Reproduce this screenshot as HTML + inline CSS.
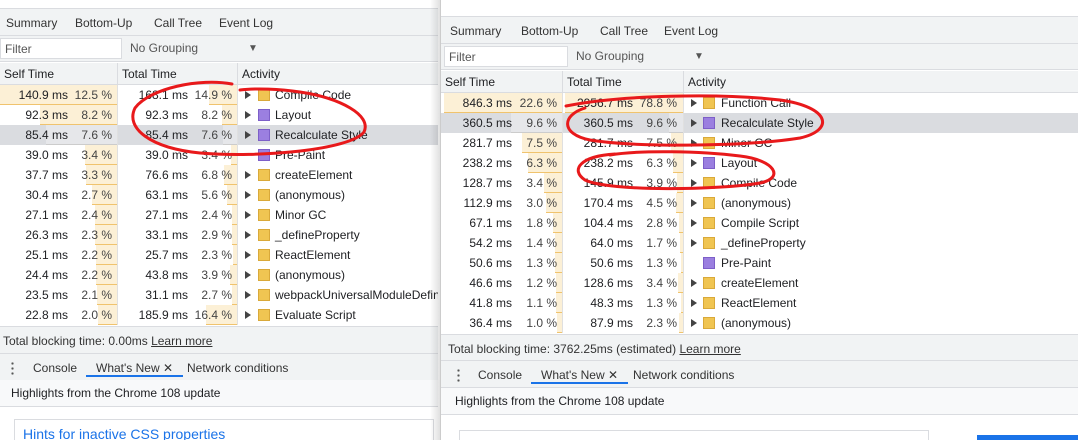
<!DOCTYPE html>
<html><head><meta charset="utf-8"><style>
*{box-sizing:border-box;margin:0;padding:0}
body{width:1078px;height:440px;overflow:hidden;background:#fff;font-family:"Liberation Sans",sans-serif;font-size:12px;color:#202124;position:relative}
.p{position:absolute;top:0;height:440px;overflow:hidden;background:#fff}
.tabs{position:absolute;left:0;right:0;height:28px;background:#f1f3f4;border-top:1px solid #dadce0;border-bottom:1px solid #dadce0}
.tabs span{position:absolute;top:7px;color:#333}
.tabs .a{border-bottom:2px solid #1a73e8;padding-bottom:6px}
.flt{position:absolute;left:0;right:0;height:26px;background:#f1f3f4;border-bottom:1px solid #dadce0}
.flt .in{position:absolute;top:2px;height:21px;background:#fff;border:1px solid #dadce0;padding:3px 4px;color:#555}
.flt .g{position:absolute;top:5px;color:#555}
.hd{position:absolute;left:0;right:0;height:22px;background:#f1f3f4;border-bottom:1px solid #dadce0}
.hd span{position:absolute;top:4px;height:22px;top:0;padding:4px 4px;border-right:1px solid #dadce0}
.rows{position:absolute;left:0;right:0}
.r{position:relative;height:20px}
.r.sel{background:#dadce0}
.c{position:absolute;top:0;height:20px;border-right:1px solid #e0e0e0}
.c i{position:absolute;right:0;top:0;height:20px;background:#fcf0d6;border-bottom:1px solid #f0c36d}
.sel .c i{background:#e6e7ea;border-bottom-color:#ccc}
.c b,.c em{position:absolute;top:3px;font-weight:normal;font-style:normal;white-space:nowrap}
.c em{color:#444}
.act{position:absolute;top:3px;white-space:nowrap}
.tri{position:absolute;top:6px;width:0;height:0;border-left:6px solid #444;border-top:4px solid transparent;border-bottom:4px solid transparent}
.sq{position:absolute;top:4px;width:12px;height:12px}
.y{background:#f0c552;border:1px solid #d9a93a}
.v{background:#9b7fe0;border:1px solid #7d5fc8}
.tb{position:absolute;left:0;right:0;height:27px;background:#f1f3f4;border-top:1px solid #dadce0;color:#333}
.dr{position:absolute;left:0;right:0;height:28px;background:#f1f3f4;border-top:1px solid #dadce0;border-bottom:1px solid #dadce0}
.dr span{position:absolute;top:7px;color:#333}
.dr .a{border-bottom:2px solid #1a73e8;padding-bottom:5px}
.hl{position:absolute;left:0;right:0;height:27px;background:#f8f9fa;border-bottom:1px solid #dadce0;padding:6px 11px}
.dots{position:absolute;top:7px;width:3px;height:14px;background:radial-gradient(circle,#555 1px,transparent 1.3px) 0 0/3px 5px}
u{color:#333}
</style></head><body>

<!-- LEFT PANEL -->
<div class="p" style="left:0;width:438px">
<div class="tabs" style="top:8px"><span style="left:6px">Summary</span><span class="a" style="left:67px;padding-left:8px;padding-right:7px">Bottom-Up</span><span style="left:154px">Call Tree</span><span style="left:219px">Event Log</span></div>
<div class="flt" style="top:36px"><div class="in" style="left:0;width:122px">Filter</div><span class="g" style="left:130px">No Grouping</span><span class="g" style="left:248px;font-size:10px;top:7px">▼</span></div>
<div class="hd" style="top:63px"><span style="left:0;width:118px">Self Time</span><span style="left:118px;width:120px">Total Time</span><span style="left:238px;border:0">Activity</span></div>
<div class="rows" style="top:85px">
<div class="r"><div class="c" style="left:0;width:118px"><i style="width:117px"></i><b style="right:49px">140.9 ms</b><em style="right:5px">12.5 %</em></div><div class="c" style="left:118px;width:120px"><i style="width:28px"></i><b style="right:49px">168.1 ms</b><em style="right:5px">14.9 %</em></div><div class="tri" style="left:245px"></div><div class="sq y" style="left:258px"></div><span class="act" style="left:275px">Compile Code</span></div>
<div class="r"><div class="c" style="left:0;width:118px"><i style="width:77px"></i><b style="right:49px">92.3 ms</b><em style="right:5px">8.2 %</em></div><div class="c" style="left:118px;width:120px"><i style="width:15px"></i><b style="right:49px">92.3 ms</b><em style="right:5px">8.2 %</em></div><div class="tri" style="left:245px"></div><div class="sq v" style="left:258px"></div><span class="act" style="left:275px">Layout</span></div>
<div class="r sel"><div class="c" style="left:0;width:118px"><i style="width:71px"></i><b style="right:49px">85.4 ms</b><em style="right:5px">7.6 %</em></div><div class="c" style="left:118px;width:120px"><i style="width:14px"></i><b style="right:49px">85.4 ms</b><em style="right:5px">7.6 %</em></div><div class="tri" style="left:245px"></div><div class="sq v" style="left:258px"></div><span class="act" style="left:275px">Recalculate Style</span></div>
<div class="r"><div class="c" style="left:0;width:118px"><i style="width:32px"></i><b style="right:49px">39.0 ms</b><em style="right:5px">3.4 %</em></div><div class="c" style="left:118px;width:120px"><i style="width:6px"></i><b style="right:49px">39.0 ms</b><em style="right:5px">3.4 %</em></div><div class="sq v" style="left:258px"></div><span class="act" style="left:275px">Pre-Paint</span></div>
<div class="r"><div class="c" style="left:0;width:118px"><i style="width:31px"></i><b style="right:49px">37.7 ms</b><em style="right:5px">3.3 %</em></div><div class="c" style="left:118px;width:120px"><i style="width:13px"></i><b style="right:49px">76.6 ms</b><em style="right:5px">6.8 %</em></div><div class="tri" style="left:245px"></div><div class="sq y" style="left:258px"></div><span class="act" style="left:275px">createElement</span></div>
<div class="r"><div class="c" style="left:0;width:118px"><i style="width:25px"></i><b style="right:49px">30.4 ms</b><em style="right:5px">2.7 %</em></div><div class="c" style="left:118px;width:120px"><i style="width:10px"></i><b style="right:49px">63.1 ms</b><em style="right:5px">5.6 %</em></div><div class="tri" style="left:245px"></div><div class="sq y" style="left:258px"></div><span class="act" style="left:275px">(anonymous)</span></div>
<div class="r"><div class="c" style="left:0;width:118px"><i style="width:22px"></i><b style="right:49px">27.1 ms</b><em style="right:5px">2.4 %</em></div><div class="c" style="left:118px;width:120px"><i style="width:5px"></i><b style="right:49px">27.1 ms</b><em style="right:5px">2.4 %</em></div><div class="tri" style="left:245px"></div><div class="sq y" style="left:258px"></div><span class="act" style="left:275px">Minor GC</span></div>
<div class="r"><div class="c" style="left:0;width:118px"><i style="width:22px"></i><b style="right:49px">26.3 ms</b><em style="right:5px">2.3 %</em></div><div class="c" style="left:118px;width:120px"><i style="width:5px"></i><b style="right:49px">33.1 ms</b><em style="right:5px">2.9 %</em></div><div class="tri" style="left:245px"></div><div class="sq y" style="left:258px"></div><span class="act" style="left:275px">_defineProperty</span></div>
<div class="r"><div class="c" style="left:0;width:118px"><i style="width:21px"></i><b style="right:49px">25.1 ms</b><em style="right:5px">2.2 %</em></div><div class="c" style="left:118px;width:120px"><i style="width:4px"></i><b style="right:49px">25.7 ms</b><em style="right:5px">2.3 %</em></div><div class="tri" style="left:245px"></div><div class="sq y" style="left:258px"></div><span class="act" style="left:275px">ReactElement</span></div>
<div class="r"><div class="c" style="left:0;width:118px"><i style="width:21px"></i><b style="right:49px">24.4 ms</b><em style="right:5px">2.2 %</em></div><div class="c" style="left:118px;width:120px"><i style="width:7px"></i><b style="right:49px">43.8 ms</b><em style="right:5px">3.9 %</em></div><div class="tri" style="left:245px"></div><div class="sq y" style="left:258px"></div><span class="act" style="left:275px">(anonymous)</span></div>
<div class="r"><div class="c" style="left:0;width:118px"><i style="width:20px"></i><b style="right:49px">23.5 ms</b><em style="right:5px">2.1 %</em></div><div class="c" style="left:118px;width:120px"><i style="width:5px"></i><b style="right:49px">31.1 ms</b><em style="right:5px">2.7 %</em></div><div class="tri" style="left:245px"></div><div class="sq y" style="left:258px"></div><span class="act" style="left:275px">webpackUniversalModuleDefin</span></div>
<div class="r"><div class="c" style="left:0;width:118px"><i style="width:19px"></i><b style="right:49px">22.8 ms</b><em style="right:5px">2.0 %</em></div><div class="c" style="left:118px;width:120px"><i style="width:31px"></i><b style="right:49px">185.9 ms</b><em style="right:5px">16.4 %</em></div><div class="tri" style="left:245px"></div><div class="sq y" style="left:258px"></div><span class="act" style="left:275px">Evaluate Script</span></div>
</div>
<div class="tb" style="top:326px;padding:7px 3px">Total blocking time: 0.00ms <u>Learn more</u></div>
<div class="dr" style="top:353px"><div class="dots" style="left:11px"></div><span style="left:33px">Console</span><span class="a" style="left:86px;padding:0 10px">What's New <span style="position:static">✕</span></span><span style="left:187px">Network conditions</span></div>
<div class="hl" style="top:380px">Highlights from the Chrome 108 update</div>
<div style="position:absolute;left:14px;top:419px;width:420px;height:30px;border:1px solid #dadce0;padding:6px 8px;color:#1a73e8;font-size:14px">Hints for inactive CSS properties</div>
</div>
<div style="position:absolute;left:430px;top:0;width:10px;height:440px;background:linear-gradient(90deg,rgba(0,0,0,0),rgba(0,0,0,.12))"></div>

<!-- RIGHT PANEL -->
<div class="p" style="left:440px;width:638px;border-left:1px solid #ccc">
<div class="tabs" style="top:16px"><span style="left:9px">Summary</span><span class="a" style="left:70px;padding-left:10px;padding-right:10px">Bottom-Up</span><span style="left:159px">Call Tree</span><span style="left:223px">Event Log</span></div>
<div class="flt" style="top:44px"><div class="in" style="left:3px;width:124px">Filter</div><span class="g" style="left:135px">No Grouping</span><span class="g" style="left:253px;font-size:10px;top:7px">▼</span></div>
<div class="hd" style="top:71px"><span style="left:0;width:122px">Self Time</span><span style="left:122px;width:121px">Total Time</span><span style="left:243px;border:0">Activity</span></div>
<div class="rows" style="top:93px">
<div class="r"><div class="c" style="left:0;width:122px"><i style="width:118px"></i><b style="right:50px">846.3 ms</b><em style="right:5px">22.6 %</em></div><div class="c" style="left:122px;width:121px"><i style="width:118px"></i><b style="right:50px">2956.7 ms</b><em style="right:6px">78.8 %</em></div><div class="tri" style="left:250px"></div><div class="sq y" style="left:262px"></div><span class="act" style="left:280px">Function Call</span></div>
<div class="r sel"><div class="c" style="left:0;width:122px"><i style="width:51px"></i><b style="right:50px">360.5 ms</b><em style="right:5px">9.6 %</em></div><div class="c" style="left:122px;width:121px"><i style="width:14px"></i><b style="right:50px">360.5 ms</b><em style="right:6px">9.6 %</em></div><div class="tri" style="left:250px"></div><div class="sq v" style="left:262px"></div><span class="act" style="left:280px">Recalculate Style</span></div>
<div class="r"><div class="c" style="left:0;width:122px"><i style="width:40px"></i><b style="right:50px">281.7 ms</b><em style="right:5px">7.5 %</em></div><div class="c" style="left:122px;width:121px"><i style="width:12px"></i><b style="right:50px">281.7 ms</b><em style="right:6px">7.5 %</em></div><div class="tri" style="left:250px"></div><div class="sq y" style="left:262px"></div><span class="act" style="left:280px">Minor GC</span></div>
<div class="r"><div class="c" style="left:0;width:122px"><i style="width:34px"></i><b style="right:50px">238.2 ms</b><em style="right:5px">6.3 %</em></div><div class="c" style="left:122px;width:121px"><i style="width:10px"></i><b style="right:50px">238.2 ms</b><em style="right:6px">6.3 %</em></div><div class="tri" style="left:250px"></div><div class="sq v" style="left:262px"></div><span class="act" style="left:280px">Layout</span></div>
<div class="r"><div class="c" style="left:0;width:122px"><i style="width:18px"></i><b style="right:50px">128.7 ms</b><em style="right:5px">3.4 %</em></div><div class="c" style="left:122px;width:121px"><i style="width:6px"></i><b style="right:50px">145.9 ms</b><em style="right:6px">3.9 %</em></div><div class="tri" style="left:250px"></div><div class="sq y" style="left:262px"></div><span class="act" style="left:280px">Compile Code</span></div>
<div class="r"><div class="c" style="left:0;width:122px"><i style="width:16px"></i><b style="right:50px">112.9 ms</b><em style="right:5px">3.0 %</em></div><div class="c" style="left:122px;width:121px"><i style="width:7px"></i><b style="right:50px">170.4 ms</b><em style="right:6px">4.5 %</em></div><div class="tri" style="left:250px"></div><div class="sq y" style="left:262px"></div><span class="act" style="left:280px">(anonymous)</span></div>
<div class="r"><div class="c" style="left:0;width:122px"><i style="width:9px"></i><b style="right:50px">67.1 ms</b><em style="right:5px">1.8 %</em></div><div class="c" style="left:122px;width:121px"><i style="width:4px"></i><b style="right:50px">104.4 ms</b><em style="right:6px">2.8 %</em></div><div class="tri" style="left:250px"></div><div class="sq y" style="left:262px"></div><span class="act" style="left:280px">Compile Script</span></div>
<div class="r"><div class="c" style="left:0;width:122px"><i style="width:7px"></i><b style="right:50px">54.2 ms</b><em style="right:5px">1.4 %</em></div><div class="c" style="left:122px;width:121px"><i style="width:3px"></i><b style="right:50px">64.0 ms</b><em style="right:6px">1.7 %</em></div><div class="tri" style="left:250px"></div><div class="sq y" style="left:262px"></div><span class="act" style="left:280px">_defineProperty</span></div>
<div class="r"><div class="c" style="left:0;width:122px"><i style="width:7px"></i><b style="right:50px">50.6 ms</b><em style="right:5px">1.3 %</em></div><div class="c" style="left:122px;width:121px"><i style="width:2px"></i><b style="right:50px">50.6 ms</b><em style="right:6px">1.3 %</em></div><div class="sq v" style="left:262px"></div><span class="act" style="left:280px">Pre-Paint</span></div>
<div class="r"><div class="c" style="left:0;width:122px"><i style="width:6px"></i><b style="right:50px">46.6 ms</b><em style="right:5px">1.2 %</em></div><div class="c" style="left:122px;width:121px"><i style="width:5px"></i><b style="right:50px">128.6 ms</b><em style="right:6px">3.4 %</em></div><div class="tri" style="left:250px"></div><div class="sq y" style="left:262px"></div><span class="act" style="left:280px">createElement</span></div>
<div class="r"><div class="c" style="left:0;width:122px"><i style="width:6px"></i><b style="right:50px">41.8 ms</b><em style="right:5px">1.1 %</em></div><div class="c" style="left:122px;width:121px"><i style="width:2px"></i><b style="right:50px">48.3 ms</b><em style="right:6px">1.3 %</em></div><div class="tri" style="left:250px"></div><div class="sq y" style="left:262px"></div><span class="act" style="left:280px">ReactElement</span></div>
<div class="r"><div class="c" style="left:0;width:122px"><i style="width:5px"></i><b style="right:50px">36.4 ms</b><em style="right:5px">1.0 %</em></div><div class="c" style="left:122px;width:121px"><i style="width:4px"></i><b style="right:50px">87.9 ms</b><em style="right:6px">2.3 %</em></div><div class="tri" style="left:250px"></div><div class="sq y" style="left:262px"></div><span class="act" style="left:280px">(anonymous)</span></div>
</div>
<div class="tb" style="top:334px;padding:7px 7px">Total blocking time: 3762.25ms (estimated) <u>Learn more</u></div>
<div class="dr" style="top:360px"><div class="dots" style="left:16px"></div><span style="left:37px">Console</span><span class="a" style="left:90px;padding:0 10px">What's New <span style="position:static">✕</span></span><span style="left:192px">Network conditions</span></div>
<div class="hl" style="top:388px;padding-left:14px">Highlights from the Chrome 108 update</div>
<div style="position:absolute;left:18px;top:430px;width:470px;height:30px;border:1px solid #dadce0;padding:6px 8px;color:#1a73e8;font-size:14px">Hints for inactive CSS properties</div>
<div style="position:absolute;left:536px;top:435px;width:110px;height:20px;background:#1a73e8"></div>
</div>

<!-- red annotations -->
<svg style="position:absolute;left:0;top:0" width="1078" height="440" fill="none" stroke="#e8191b" stroke-width="3" stroke-linecap="round">
<path d="M232 84 C200 78 150 88 135 108 C125 128 150 148 200 153 C260 158 350 150 364 132 C372 115 340 98 300 92 C280 89 255 88 240 90"/>
<path d="M566 106 C620 95 720 93 780 100 C830 107 835 130 800 138 C750 146 640 148 590 140 C560 134 562 115 585 108"/>
<path d="M615 154 C580 156 570 170 585 180 C610 192 720 190 760 183 C785 178 775 160 740 156 C700 151 640 150 610 155"/>
</svg>
</body></html>
